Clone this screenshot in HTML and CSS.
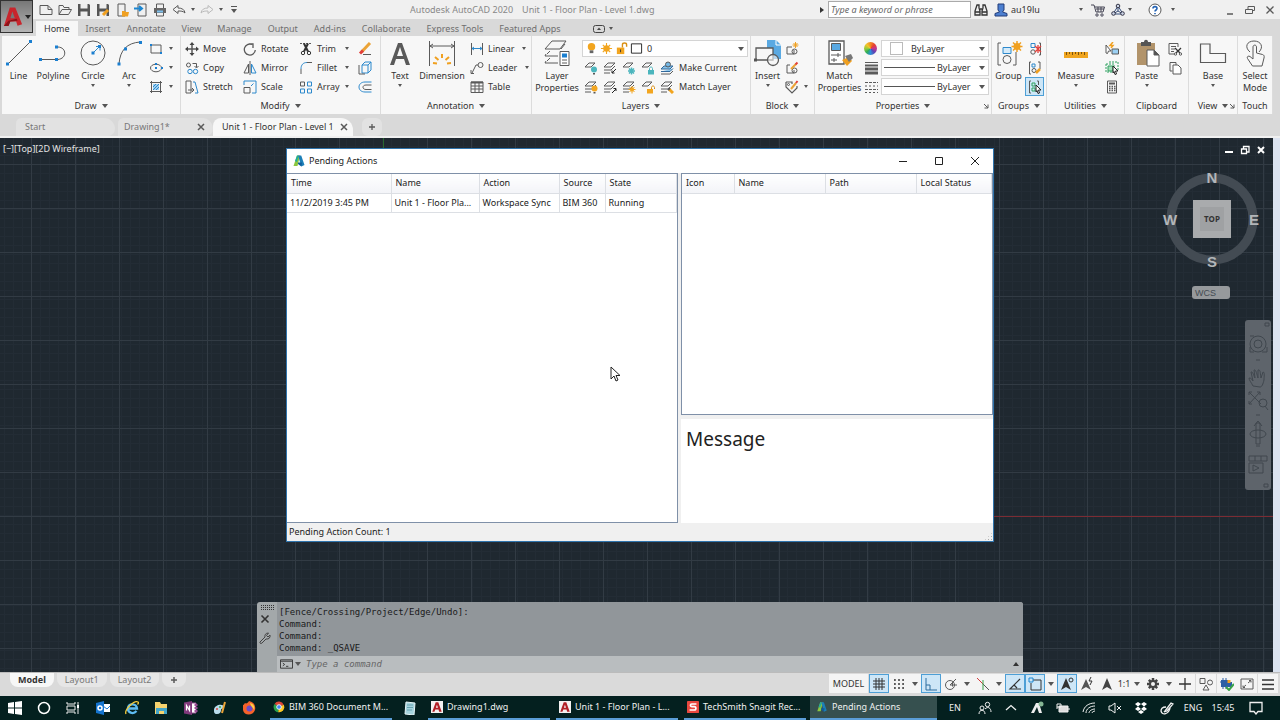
FILE: index.html
```html
<!DOCTYPE html>
<html lang="en">
<head>
<meta charset="utf-8">
<title>Autodesk AutoCAD 2020 - Unit 1 - Floor Plan - Level 1.dwg</title>
<link rel="stylesheet" href="styles.css">
</head>
<body>
<svg class="defs" aria-hidden="true">
  <symbol id="acad" viewBox="0 0 14 14"><path d="M0 0h14v14H0z" fill="#f4f1f1" stroke="none"/><path d="M1.500 12.500 5.500 1.500h3l4 11H9.500L8.800 10H5l-1 2.500z" fill="#b11f26" stroke="none"/><path d="m6.900 4.500 1.300 3.500H5.700z" fill="#f4f1f1" stroke="none"/></symbol>
  <symbol id="adsk" viewBox="0 0 14 14"><path d="M5 1.500h3L5.500 12H1.500z" fill="#8cc63f" stroke="none"/><path d="M3 7 5 1.500h1.500L5 8z" fill="#1fae9b" stroke="none"/><path d="M6 1.500h3.200l3.300 9.500-3.200 1.500z" fill="#1c7fb8" stroke="none"/><path d="M6 8.500h4L9.300 12.500 6 10z" fill="#0f5c9b" stroke="none"/></symbol>
  <symbol id="layer" viewBox="0 0 14 14"><path d="M1 6 5 2h7L8 6zM1 9h7l4-4M1 12h6"/></symbol>
  <symbol id="oneLayer" viewBox="0 0 14 14"><path d="M1 6 5 2h6L7 6z"/></symbol>
</svg>

<header class="top">
  <button class="logo" aria-label="Application menu"><svg viewBox="0 0 22 24"><path d="M1 22 7.500 1.500h6L21 20l-5 1.500L14.500 17H8l-2 5z" fill="#c8252c" stroke="none"/><path d="m10.300 6 2.700 7.500H8z" fill="#777" stroke="none"/><path d="m1 22 5-6 9-2 1 2-8 1-2 5z" fill="#8d1218" stroke="none"/></svg><i class="caret"></i></button>
  <div class="titlebar">
    <nav class="quick" aria-label="Quick access">
      <button aria-label="New"><svg viewBox="0 0 14 14"><path d="M1 2.500h8l4 4v5H1zM9 2.500v4h4"/></svg></button>
      <button aria-label="Open"><svg viewBox="0 0 14 14"><path d="M1 11.500v-9h4l1 2h5v2M1 11.500l3-5h9.500l-3 5z"/></svg></button>
      <button aria-label="Save"><svg viewBox="0 0 14 14"><path d="M1 1h11l1 1v11H1z" fill="#555" stroke="none"/><path d="M3.500 1h7v4.500h-7zM3.500 8.500h7V13h-7z" fill="#eee" stroke="none"/></svg></button>
      <button aria-label="Save as"><svg viewBox="0 0 14 14"><path d="M1 1h11l1 1v11H1z" fill="#555" stroke="none"/><path d="M3.500 1h7v4.500h-7zM3.500 8.500h7V13h-7z" fill="#eee" stroke="none"/><path d="m7 12 5-5" stroke="#f0a020" stroke-width="3"/></svg></button>
      <button aria-label="Open from mobile"><svg viewBox="0 0 14 14"><path d="M3 1h7v12H3z"/><path d="M7 8h3l1 1h3l-1 4.500H7z" fill="#f0a020" stroke="none"/></svg></button>
      <button aria-label="Save to mobile"><svg viewBox="0 0 14 14"><path d="M4 1h8v12H4z"/><path d="M0 5.500h7M5 3l3 2.500L5 8" stroke="#1b86d1" stroke-width="2"/></svg></button>
      <button aria-label="Plot"><svg viewBox="0 0 14 14"><path d="M3.500 5V1h7v4M3.500 9v4h7V9"/><path d="M1 5h12v5H1z" fill="#666" stroke="none"/><path d="M4 8.500h6" stroke="#7cc0ee" stroke-width="2"/></svg></button>
      <button aria-label="Undo"><svg viewBox="0 0 14 14"><path d="m1 6.500 5-4V5c4 0 6.500 1.500 7 5C11 8 9 8 6 8v2.500z"/></svg></button>
      <i class="caret small"></i>
      <button aria-label="Redo"><svg class="faded" viewBox="0 0 14 14"><path d="m13 6.500-5-4V5C4 5 1.500 6.500 1 10 3 8 5 8 8 8v2.500z"/></svg></button>
      <i class="caret small"></i>
      <button class="more" aria-label="Customize"><i class="caret"></i></button>
    </nav>
    <h1><span>Autodesk AutoCAD 2020</span><span>Unit 1 - Floor Plan - Level 1.dwg</span></h1>
    <div class="account">
      <i class="caret side"></i>
      <input type="text" aria-label="Search" placeholder="Type a keyword or phrase">
      <button class="w20" aria-label="Find"><svg viewBox="0 0 14 14"><path d="M3 2h2v3l1 3v4H1V8zM11 2H9v3L8 8v4h5V8zM6 6h2M1 9h5M8 9h5" stroke="#333" stroke-width="1.300"/></svg></button>
      <button class="user"><svg viewBox="0 0 14 14"><path d="M4 1h6v6L8.500 9l4.500 1.500V13H1v-2.500L5.500 9 4 7z" fill="#4c7fd0" stroke="#233c78"/></svg><span>au19lu</span><i class="caret small"></i></button>
      <button class="w20" aria-label="Store"><svg viewBox="0 0 14 14"><path d="M0 2h3l2 7h7l1.500-5H4M5 6h8M7 4v5M10 4v5" stroke="#445"/><circle cx="6" cy="12" r="1.200" stroke="#445"/><circle cx="11" cy="12" r="1.200" stroke="#445"/></svg></button>
      <button class="w20" aria-label="Stay connected"><svg viewBox="0 0 14 14"><path d="M7 3 2 11h10zM7 3v5l-5 3M7 8l5 3" stroke="#334a78"/><circle cx="7" cy="3" r="1.800" fill="#ccd5e8" stroke="#334"/><circle cx="2.500" cy="10.500" r="1.800" fill="#ccd5e8" stroke="#334"/><circle cx="11.500" cy="10.500" r="1.800" fill="#ccd5e8" stroke="#334"/></svg></button>
      <i class="caret small"></i>
      <button class="help" aria-label="Help"><svg viewBox="0 0 14 14"><circle cx="7" cy="7" r="6" fill="#fff"/><path d="M5 5.500C5 3 9 3 9 5.500 9 7 7 7 7 8.500M7 10v1.200" stroke="#2463b4" stroke-width="1.600"/></svg></button>
      <i class="caret small"></i>
    </div>
    <div class="winbtns">
      <button aria-label="Minimize"><svg viewBox="0 0 14 14"><path d="M4 11h6" stroke-width="1.500"/></svg></button>
      <button aria-label="Restore"><svg viewBox="0 0 14 14"><path d="M2.500 6.500h7v4h-7zM5 6V3.500h6.500v4H10"/></svg></button>
      <button aria-label="Close"><svg viewBox="0 0 14 14"><path d="m3.500 3.500 7 7M10.500 3.500l-7 7" stroke-width="1.300"/></svg></button>
    </div>
  </div>
  <nav class="tabs" aria-label="Ribbon tabs">
    <button class="on">Home</button><button>Insert</button><button>Annotate</button><button>View</button><button>Manage</button><button>Output</button><button>Add-ins</button><button>Collaborate</button><button>Express Tools</button><button>Featured Apps</button>
    <button class="collapse" aria-label="Minimize ribbon"><svg viewBox="0 0 12 8"><rect x=".5" y=".5" width="11" height="7" rx="2"/><path d="M4 5h4L6 2.500z" fill="#444" stroke="none"/></svg><i class="caret small"></i></button>
  </nav>
</header>

<section class="ribbon" aria-label="Ribbon">
  <div class="panel">
    <div class="body draw">
      <button class="big"><svg viewBox="0 0 28 28"><path d="M3 25 26 2"/><path d="M1 23.500h3v3H1zM24 1h3v3h-3z" class="bf"/></svg>Line</button>
      <button class="big"><svg viewBox="0 0 28 28"><path d="M2 20.500h17c9-1 9-12 0-12.500"/><path d="M0 19h3v3H0zM16 19h3v3h-3zM16 6.500h3v3h-3z" class="bf"/></svg>Polyline</button>
      <button class="big"><svg viewBox="0 0 28 28"><circle cx="14" cy="14" r="12"/><path d="m14 14 6-6M17 7.500h4v4" class="bs"/><path d="M12.500 12.500h3v3h-3zM19 6h3v3h-3z" class="bf"/></svg>Circle<i class="caret small"></i></button>
      <button class="big"><svg viewBox="0 0 28 28"><path d="M4 25C5 11 12 4 25 3"/><path d="M2.500 23.500h3v3h-3zM9 8.500h3v3H9zM24 2h3v3h-3z" class="bf"/></svg>Arc<i class="caret small"></i></button>
      <div class="rows">
        <button aria-label="Rectangle"><svg viewBox="0 0 14 14"><path d="M2 3h10v8H2z"/><path d="M1 2h2v2H1zM11 10h2v2h-2z" class="bf"/></svg><i class="caret small"></i></button>
        <button aria-label="Ellipse"><svg viewBox="0 0 14 14"><ellipse cx="7" cy="7" rx="5.500" ry="3.800"/><path d="M6 6h2v2H6zM12 6h2v2h-2zM6 2h2v2H6z" class="bf"/></svg><i class="caret small"></i></button>
        <button aria-label="Hatch"><svg viewBox="0 0 14 14"><path d="M4 4h6v6H4z" fill="#9cd0f3" stroke="none"/><path d="m4 7 3-3M4 10l6-6M7 10l3-3" class="bs"/><path d="M2.500 1v12M11.500 1v12M1 2.500h12M1 11.500h12"/></svg><i class="caret small"></i></button>
      </div>
    </div>
    <footer>Draw<i class="caret"></i></footer>
  </div>

  <div class="panel">
    <div class="body modify">
      <div class="rows">
        <button><svg viewBox="0 0 14 14"><path d="M7 2v10M2 7h10" stroke-width="1.500"/><path d="m7 0 2.500 3h-5zM7 14l2.500-3h-5zM0 7l3-2.500v5zM14 7l-3-2.500v5z" fill="#444" stroke="none"/></svg>Move</button>
        <button><svg viewBox="0 0 14 14"><circle cx="3.500" cy="4" r="2"/><path d="M7.500 2.500h4v4M9.500 5l2 2 2-2"/><circle cx="5" cy="10.500" r="2.200" class="bs"/><circle cx="10.500" cy="10.500" r="2.200" class="bs"/></svg>Copy</button>
        <button><svg viewBox="0 0 14 14"><path d="M1 1h5v12H1zM3 10h6M7 8l2 2-2 2"/><path d="M8 2h2l3 11h-3" class="bs"/></svg>Stretch</button>
      </div>
      <div class="rows">
        <button><svg viewBox="0 0 14 14"><path d="M9 2.500A5.500 5.500 0 1 0 12.300 8M6 2h4v4" stroke-width="1.300"/></svg>Rotate</button>
        <button><svg viewBox="0 0 14 14"><path d="M5.500 3v9H1z"/><path d="M8.500 3v9H13z" class="bs"/><path d="M7 0v14"/></svg>Mirror</button>
        <button><svg viewBox="0 0 14 14"><path d="M1 5V1h12v12H9" class="bs"/><path d="M1 7.500h6V13H1z"/><path d="M8 6l2.500-2.500" class="bs"/></svg>Scale</button>
      </div>
      <div class="rows spread">
        <button><svg viewBox="0 0 14 14"><path d="M1 1.500h12" stroke-dasharray="2 1"/><path d="m5 1.500 4 8M9 1.500l-4 8" stroke="#333" stroke-width="2"/><circle cx="4" cy="11" r="1.700" stroke="#333"/><circle cx="10" cy="11" r="1.700" stroke="#333"/></svg>Trim<i class="caret small"></i></button>
        <button><svg viewBox="0 0 14 14"><path d="M2 13V8M8 1.500h5"/><path d="M2 8c0-4 2-6.500 6-6.500" class="bs"/></svg>Fillet<i class="caret small"></i></button>
        <button><svg viewBox="0 0 14 14"><path d="M1.500 2h4v4h-4z"/><path d="M8.500 2h4v4h-4zM1.500 9h4v4h-4zM8.500 9h4v4h-4z" class="bs"/></svg>Array<i class="caret small"></i></button>
      </div>
      <div class="rows">
        <button aria-label="Erase"><svg viewBox="0 0 14 14"><path d="M3.500 10 12 1" stroke="#eba337" stroke-width="3"/><path d="m2 11.500 3-3" stroke="#e2403b" stroke-width="3"/><path d="M5 12.500h8"/></svg></button>
        <button aria-label="Explode"><svg viewBox="0 0 14 14"><path d="M4 4h6v8H4zM4 4l3-3h6v8l-3 3M10 4l3-3" class="bs"/><path d="M1 4v9h6"/></svg></button>
        <button aria-label="Offset"><svg viewBox="0 0 14 14"><path d="M13.500 2H7C-1 2-1 12 7 12h6.500" class="bs"/><path d="M13.500 5H8c-4 0-4 4.500 0 4.500h5.500"/></svg></button>
      </div>
    </div>
    <footer>Modify<i class="caret"></i></footer>
  </div>

  <div class="panel">
    <div class="body anno">
      <button class="big"><svg viewBox="0 0 28 28"><path d="M4 26 12 4h4l8 22h-4l-2-6h-8l-2 6zm7-9h6l-3-9z" fill="#5a5a5a" stroke="none"/></svg>Text<i class="caret small"></i></button>
      <button class="big"><svg viewBox="0 0 28 28"><path d="M1.500 2v25M26.500 2v25M2 7h24M5 5 2 7l3 2M23 5l3 2-3 2"/><path d="m5 24 4 .5M7 18l3.500 3M14 15v4M21 18l-3.500 3M23 24l-4 .5" stroke="#f0a020" stroke-width="2"/></svg>Dimension</button>
      <div class="rows">
        <button><svg viewBox="0 0 14 14"><path d="M1.500 1v12M12.500 1v12"/><path d="M2 6.500h10M4 5 2 6.500 4 8M10 5l2 1.500L10 8" class="bs"/></svg>Linear<i class="caret small"></i></button>
        <button><svg viewBox="0 0 14 14"><circle cx="10.500" cy="4" r="2.500"/><path d="M8 4H6l-4 8M1 9v3.500h3"/></svg>Leader<i class="caret small"></i></button>
        <button><svg viewBox="0 0 14 14"><path d="M1 2h12v10.500H1zM1 6h12M1 9h12M5 3v9M9 3v9"/><path d="M1 2.500h12" stroke-width="2"/></svg>Table</button>
      </div>
    </div>
    <footer>Annotation<i class="caret"></i></footer>
  </div>

  <div class="panel">
    <div class="body layers">
      <button class="big"><svg viewBox="0 0 28 28"><path d="m2 10 7-8h14l-6 8zM3 15l-1 2h13M7 12l-3 3M3 22l-1 2h13M7 19l-3 3M18 10l4-5"/><path d="M17 12.500h9v14h-9z" fill="#fff"/><path d="M19 14.500h5v4h-5z" class="bf"/><path d="M19 21h5M19 24h5"/></svg>Layer<br>Properties</button>
      <div class="stack">
        <div class="combo">
          <svg viewBox="0 0 14 14"><circle cx="7" cy="5" r="4" fill="#f2a51f" stroke="none"/><path d="M5 9h4v3H5z" fill="#666" stroke="none"/></svg>
          <svg viewBox="0 0 14 14"><path d="M7 1v12M1 7h12M3 3l8 8M11 3l-8 8" stroke="#f2a51f" stroke-width="1.200"/><circle cx="7" cy="7" r="3.500" fill="#f2a51f" stroke="none"/></svg>
          <svg viewBox="0 0 14 14"><path d="M2 6h8v7H2z" fill="#f2a51f" stroke="none"/><path d="M8 6V3c0-2.500 4.500-2.500 4.500 0v2" stroke="#d98f14" stroke-width="1.500"/><path d="M6 8v3" stroke="#333"/></svg>
          <svg viewBox="0 0 14 14"><path d="M1.500 2h11v10h-11z" fill="#fff" stroke="#222"/></svg>
          <select aria-label="Layer"><option>0</option></select><i class="caret"></i>
        </div>
        <div class="strip">
          <button aria-label="Off"><svg viewBox="0 0 14 14"><use href="#oneLayer"/><circle cx="10" cy="8.500" r="3" fill="#4bb5bd" stroke="none"/><path d="M9 12h2v1.500H9z" fill="#555" stroke="none"/></svg></button>
          <button aria-label="Isolate"><svg viewBox="0 0 14 14"><use href="#layer"/><path d="m13 8-4 4M9 9.500V12h2.500" stroke="#222"/></svg></button>
          <button aria-label="Freeze"><svg viewBox="0 0 14 14"><use href="#oneLayer"/><path d="M9.500 6.500v7M6 10h7M7 7.500l5 5M12 7.500l-5 5" stroke="#4bb5bd" stroke-width="1.500"/></svg></button>
          <button aria-label="Lock"><svg viewBox="0 0 14 14"><use href="#oneLayer"/><path d="M7 9h6v4.500H7z" fill="#4bb5bd" stroke="none"/><path d="M8.500 9V7.500c0-2 3-2 3 0V9" stroke="#4bb5bd"/></svg></button>
          <button><svg viewBox="0 0 14 14"><path d="m1 8 3-3h9l-3 3zM1 10.500h9l3-3" fill="#8ac5ec" stroke="#31689a"/><path d="M1 13h9l3-3"/><circle cx="8" cy="3.500" r="2.500" fill="#74b8e6"/></svg>Make Current</button>
        </div>
        <div class="strip">
          <button aria-label="Turn all on"><svg viewBox="0 0 14 14"><use href="#layer"/><circle cx="10.500" cy="8.500" r="3" fill="#f2a51f" stroke="none"/><path d="M9.500 12h2v1.500h-2z" fill="#555" stroke="none"/></svg></button>
          <button aria-label="Unisolate"><svg viewBox="0 0 14 14"><use href="#layer"/><path d="m9 13 4-4M10.500 8.500H13V11" stroke="#222"/></svg></button>
          <button aria-label="Thaw all"><svg viewBox="0 0 14 14"><use href="#layer"/><path d="M10 6v7.500M6.500 9.500h7M7.500 7l5 5M12.500 7l-5 5" stroke="#f2a51f"/><circle cx="10" cy="9.500" r="2" fill="#f2a51f" stroke="none"/></svg></button>
          <button aria-label="Unlock"><svg viewBox="0 0 14 14"><use href="#oneLayer"/><path d="M6 9h6v4.500H6z" fill="#f2a51f" stroke="none"/><path d="M10.500 9V7.500c0-2 3-2 3 0V9" stroke="#d98f14"/></svg></button>
          <button><svg viewBox="0 0 14 14"><use href="#layer"/><path d="m9 9 4 4" stroke="#f2a51f" stroke-width="3"/><path d="m8 10 2-2" stroke-width="2"/></svg>Match Layer</button>
        </div>
      </div>
    </div>
    <footer>Layers<i class="caret"></i></footer>
  </div>

  <div class="panel">
    <div class="body block">
      <button class="big"><svg viewBox="0 0 28 28"><path d="M13 1h9l5 5v14H13z" fill="#5aa9e2" stroke="none"/><path d="M22 1v5h5" stroke="#fff"/><path d="M2 9h17v12H2z" fill="#f7f7f7" stroke-width="1.300"/><circle cx="19" cy="21" r="5.500" fill="#f7f7f7" fill-opacity=".6" stroke-width="1.300"/><path d="M0 19.500h3v3H0z" fill="#555" stroke="none"/></svg>Insert<i class="caret small"></i></button>
      <div class="rows">
        <button aria-label="Create block"><svg viewBox="0 0 14 14"><path d="M7 5H2v7h7V8"/><circle cx="9.500" cy="9.500" r="2.500"/><path d="M10.500 0v6M7.500 3h6M8.500 1l4 4M12.500 1l-4 4" stroke="#f0a020"/></svg></button>
        <button aria-label="Edit block"><svg viewBox="0 0 14 14"><path d="M5 4H2v8h7V9"/><circle cx="9.500" cy="9.500" r="2.500"/><path d="m6 8 5-5" stroke="#eba337" stroke-width="2"/><path d="m10.500 3.500 2-2" stroke="#e2403b" stroke-width="2"/></svg></button>
        <button aria-label="Edit attributes"><svg viewBox="0 0 14 14"><path d="M1 2h6v2M1 2v5l6 6 5-5V6" stroke-width="1.200"/><circle cx="3.500" cy="4.500" r="1"/><path d="m6 9 5-6" stroke="#eba337" stroke-width="2"/><path d="m11 3 1.500-2" stroke="#e2403b" stroke-width="2"/></svg><i class="caret small"></i></button>
      </div>
    </div>
    <footer>Block<i class="caret"></i></footer>
  </div>

  <div class="panel">
    <div class="body props">
      <button class="big"><svg viewBox="0 0 28 28"><path d="M3 2h15v23H3z" fill="#fff" stroke-width="1.300"/><path d="M5.500 4.500h9v7h-9z" fill="#5aa9e2"/><path d="M5 16h10M5 21h6M12 14v4M8 19v4"/><path d="m16 21 5 6 5-5-3-4z" fill="#f0a020" stroke="none"/><path d="m19 17 6-2 2 4-4 4z" fill="#777" stroke="none"/></svg>Match<br>Properties</button>
      <div class="rows">
        <button aria-label="Object color"><span class="wheel"></span></button>
        <button aria-label="Lineweight"><svg viewBox="0 0 14 14"><path d="M1 1.500h13" stroke-width="1"/><path d="M1 4.500h13" stroke-width="2"/><path d="M1 8h13M1 12h13" stroke-width="3"/></svg></button>
        <button aria-label="Linetype"><svg viewBox="0 0 14 14"><path d="M1 2.500h13M1 9.500h13" stroke-dasharray="3 1"/><path d="M1 6h13M1 12.500h13" stroke-dasharray="2 2"/></svg></button>
      </div>
      <div class="stack">
        <div class="combo color"><span class="swatch"></span><select aria-label="Color"><option>ByLayer</option></select><i class="caret"></i></div>
        <div class="combo"><span class="sample"></span><select aria-label="Lineweight value"><option>ByLayer</option></select><i class="caret"></i></div>
        <div class="combo"><span class="sample"></span><select aria-label="Linetype value"><option>ByLayer</option></select><i class="caret"></i></div>
      </div>
    </div>
    <footer>Properties<i class="caret"></i><svg class="launch" viewBox="0 0 6 6"><path d="m1 1 4 4M5 1.500V5H1.500"/></svg></footer>
  </div>

  <div class="panel">
    <div class="body groups">
      <button class="big"><svg viewBox="0 0 28 28"><path d="M6 4H3v22h3M18 26h3V13"/><path d="M8 8.500h8v6H8z" fill="#d5ebfa" class="bs"/><circle cx="12" cy="20.500" r="4"/><path d="M22 2v11M16.500 7.500h11M18 3.500l8 8M26 3.500l-8 8" stroke="#f0a020" stroke-width="1.500"/><circle cx="22" cy="7.500" r="3.500" fill="#f0a020" stroke="none"/></svg>Group</button>
      <div class="rows">
        <button aria-label="Ungroup"><svg viewBox="0 0 14 14"><path d="M3 1.500h4v4H3z" class="bs"/><circle cx="5" cy="10" r="2.200"/><path d="M11 1h1.500v12H11"/><path d="m7 4 6 6M13 4l-6 6M10 3v8" stroke="#e2403b" stroke-width="1.300"/></svg></button>
        <button aria-label="Group edit"><svg viewBox="0 0 14 14"><path d="M3 1H1.500v12H3M10 1h2v7"/><path d="M4 3h3v3H4z" class="bs"/><circle cx="6" cy="9.500" r="2"/><path d="m8 12 4-4" stroke="#f0a020" stroke-width="2.500"/></svg></button>
        <button class="hl" aria-label="Group selection on"><svg viewBox="0 0 14 14"><path d="M3 1H1.500v12H3M9 1h1.500v4"/><path d="M4 3h3v3H4zM4 8h3v3H4z" stroke="#2fa160"/><path d="m8 5 5 5h-2.500l1 3-1.500.5-1-3L8 12z" fill="#fff" stroke="#222"/></svg></button>
      </div>
    </div>
    <footer>Groups<i class="caret"></i></footer>
  </div>

  <div class="panel">
    <div class="body utils">
      <button class="big"><svg viewBox="0 0 28 28"><path d="M2 13h24v6H2z" fill="#f0a51f" stroke="none"/><path d="M4.500 13v3M7.500 13v2M10.500 13v3M13.500 13v2M16.500 13v3M19.500 13v2M22.500 13v3" stroke="#7a5310"/></svg>Measure<i class="caret small"></i></button>
      <div class="rows">
        <button aria-label="Quick select"><svg viewBox="0 0 14 14"><path d="M7 7h6.500v5H7z" fill="#9cd0f3"/><path d="m1 3 5 6H3.500l-1 2.500L1 11z" fill="#fff"/><path d="m8 0-3 3.500h3L6 6" stroke="#f0a020" stroke-width="1.500"/></svg></button>
        <button aria-label="Select all"><svg viewBox="0 0 14 14"><path d="M1 3h8v8H1zM4 1h9v8" stroke="#2fa160" stroke-dasharray="2 1"/><path d="M3 5h5v5H3z" fill="#a5dcb9" stroke="#2fa160"/><path d="m8 5 5 5h-2.500l1 3-1.500.5-1-3L8 12z" fill="#fff" stroke="#222"/></svg></button>
        <button aria-label="Calculator"><svg viewBox="0 0 14 14"><path d="M2.500 1h9v12h-9z"/><path d="M4 3.500h6" stroke-width="2"/><path d="M4 6.500h6.500M4 8.500h6.500M4 10.500h6.500" stroke-width="1.500" stroke-dasharray="1.500 1"/></svg></button>
      </div>
    </div>
    <footer>Utilities<i class="caret"></i></footer>
  </div>

  <div class="panel">
    <div class="body clip">
      <button class="big"><svg viewBox="0 0 28 28"><path d="M4 4h18v22H4z" fill="#b2946b" stroke="none"/><path d="M8 3h3c0-3 4-3 4 0h3v4H8z" fill="#555" stroke="none"/><path d="M14 11h7l5 5v11H14z" fill="#fff"/><path d="M21 11v5h5z" fill="#555"/></svg>Paste<i class="caret small"></i></button>
      <div class="rows">
        <button aria-label="Cut"><svg viewBox="0 0 14 14"><path d="M6 12H1V1.500h9V5M3 4.500h5M3 7h4M3 9.500h3"/><path d="m7 6 5 5M13 6l-5 5" stroke="#333" stroke-width="1.300"/><circle cx="7.500" cy="12" r="1.200"/><circle cx="12.500" cy="12" r="1.200"/></svg></button>
        <button aria-label="Copy clip"><svg viewBox="0 0 14 14"><path d="M4.500 10H2V1.500h6V4"/><path d="M5 4h5l3 3v6H5z" fill="#fff"/></svg></button>
      </div>
    </div>
    <footer>Clipboard</footer>
  </div>

  <div class="panel">
    <div class="body solo">
      <button class="big"><svg viewBox="0 0 28 28"><path d="M1.500 5h9.500v9.500h15.500v9h-25z" stroke-width="1.200"/></svg>Base<i class="caret small"></i></button>
    </div>
    <footer>View<i class="caret"></i><svg class="launch" viewBox="0 0 6 6"><path d="m1 1 4 4M5 1.500V5H1.500"/></svg></footer>
  </div>

  <div class="panel">
    <div class="body solo">
      <button class="big"><svg viewBox="0 0 28 28"><path d="M9 13c-6-5-3-11 4-11s10 6 5 11"/><path d="M12 18V8c0-2.500 3.500-2.500 3.500 0v6l6 1.500c1.500.5 2 1.500 1.500 3.500L21 27H11.500l-5-7.500c-1-2 1-3 2.500-2l3 2.500z"/></svg>Select<br>Mode</button>
    </div>
    <footer>Touch</footer>
  </div>
</section>

<nav class="docs" aria-label="Open drawings">
  <div class="doc start"><button>Start</button></div>
  <div class="doc second"><button>Drawing1*</button><button aria-label="Close Drawing1"><svg viewBox="0 0 8 8"><path d="m1 1 6 6M7 1 1 7" stroke-width="1.500"/></svg></button></div>
  <div class="doc on"><button>Unit 1 - Floor Plan - Level 1</button><button aria-label="Close Unit 1"><svg viewBox="0 0 8 8"><path d="m1 1 6 6M7 1 1 7" stroke-width="1.500"/></svg></button></div>
  <div class="doc add"><button aria-label="New drawing"><svg viewBox="0 0 8 8"><path d="M4 1v6M1 4h6" stroke-width="1.300"/></svg></button></div>
</nav>

<main class="canvas">
  <div class="axis x"></div><div class="axis y"></div>
  <div class="viewlabel">[−][Top][2D Wireframe]</div>
  <div class="viewwin">
    <button aria-label="Minimize view"><svg viewBox="0 0 10 10"><path d="M1 7h8" stroke="#fff" stroke-width="2"/></svg></button>
    <button aria-label="Restore view"><svg viewBox="0 0 10 10"><path d="M1.500 4h5v4.500h-5zM3.500 3.500V1.500H9V7H7" stroke="#fff" stroke-width="1.300"/></svg></button>
    <button aria-label="Close view"><svg viewBox="0 0 10 10"><path d="m2 2 6 6M8 2 2 8" stroke="#fff" stroke-width="2"/></svg></button>
  </div>
  <svg class="cube" viewBox="0 0 100 100" role="img" aria-label="View cube">
    <circle cx="50" cy="50" r="41" stroke="#434b53" stroke-width="9"/>
    <path d="M31 31h38v38H31z" fill="#a9abad" stroke="none"/><path d="M38 38h24v24H38z" fill="#9fa1a3" stroke="none"/>
    <text x="50" y="53" class="face">TOP</text>
    <text x="50" y="14">N</text><text x="50" y="98">S</text><text x="8" y="56">W</text><text x="92" y="56">E</text>
  </svg>
  <button class="wcs">WCS</button>
  <div class="navbar">
    <svg viewBox="0 0 26 170"><path d="M20 3h4v3h-4z"/><circle cx="13" cy="24" r="8"/><circle cx="13" cy="24" r="4"/><path d="M5 16h4M17 32h5v-5M5 27v5h4M11 40h4M11 95h4M11 126h4"/><path d="M8 66c-2-4-4-6-4-8 3 0 3 2 4 3l-2-9c2-1 3 5 4 6l-1-8c2-1 3 5 4 8V50c3-1 2 5 3 8l2-6c2 0 1 5 1 8-1 4-2 7-4 7z"/><path d="m4 72 12 12M15 72 4 84M4 75v-3h3M12 72h3v3M4 81v3h3"/><circle cx="18" cy="83" r="4"/><path d="m20 86 3 4M11 103h4v21h-4zM9 106l4-5 4 5"/><ellipse cx="13" cy="114" rx="8" ry="4"/><path d="M4 136h18v5H4zM10 136v5M16 136v5M4 143h14v10H4zM8 145v6l6-3zM19 164h4v3h-4z"/></svg>
  </div>

  <section class="dialog" role="dialog" aria-labelledby="dlg">
    <header><svg viewBox="0 0 14 14"><use href="#adsk"/></svg><h2 id="dlg">Pending Actions</h2>
      <button aria-label="Minimize dialog"><svg viewBox="0 0 12 12"><path d="M2 6.500h8" stroke="#222"/></svg></button>
      <button aria-label="Maximize dialog"><svg viewBox="0 0 12 12"><path d="M2.500 2.500h7v7h-7z" stroke="#222"/></svg></button>
      <button aria-label="Close dialog"><svg viewBox="0 0 12 12"><path d="m2 2 8 8M10 2l-8 8" stroke="#222"/></svg></button>
    </header>
    <div class="panes">
      <div class="list">
        <table>
          <colgroup><col class="c104"><col class="c88"><col class="c80"><col class="c46"><col></colgroup>
          <thead><tr><th>Time</th><th>Name</th><th>Action</th><th>Source</th><th>State</th></tr></thead>
          <tbody><tr><td>11/2/2019 3:45 PM</td><td>Unit 1 - Floor Pla...</td><td>Workspace Sync</td><td>BIM 360</td><td>Running</td></tr></tbody>
        </table>
      </div>
      <div class="rightpane">
        <div class="list">
          <table>
            <colgroup><col class="c52"><col class="c91"><col class="c91"><col></colgroup>
            <thead><tr><th>Icon</th><th>Name</th><th>Path</th><th>Local Status</th></tr></thead>
          </table>
        </div>
        <div class="message">Message</div>
      </div>
    </div>
    <footer><span>Pending Action Count: 1</span><i class="grip"></i></footer>
  </section>

  <svg class="pointer" viewBox="0 0 10 16"><path d="M1 1v12l3-3 2 5 2-1-2-4.500h4z" fill="#fff" stroke="#222"/></svg>

  <section class="command" aria-label="Command line">
    <div class="gutter">
      <i class="dots"></i>
      <button aria-label="Close command line"><svg viewBox="0 0 12 12"><path d="m2.500 2.500 7 7M9.500 2.500l-7 7" stroke="#333" stroke-width="1.600"/></svg></button>
      <button class="wrench" aria-label="Customize command line"><svg viewBox="0 0 12 12"><path d="M1 10c-.500 1.500 1 2 2 1l4-4c3 .5 4.500-1.500 4-4L9 5 7.500 3.500 9.500 1c-3 0-4 2-3.500 4z" stroke="#444"/></svg></button>
    </div>
    <div class="console">
      <div class="history">
        <p>[Fence/Crossing/Project/Edge/Undo]:</p><p>Command:</p><p>Command:</p><p>Command: _QSAVE</p>
      </div>
      <div class="entry">
        <svg viewBox="0 0 14 10"><path d="M.5.5h13v9H.5zM.5 2h13M3 4l2 1.500L3 7M6.500 7.500h2.500" stroke="#333"/></svg><i class="caret"></i>
        <input type="text" aria-label="Command" placeholder="Type a command"><i class="caret up"></i>
      </div>
    </div>
  </section>
</main>

<section class="bottom">
  <nav class="layouts" aria-label="Layouts"><button class="on">Model</button><button>Layout1</button><button>Layout2</button><button aria-label="New layout"><svg viewBox="0 0 8 8"><path d="M4 1v6M1 4h6" stroke-width="1.500"/></svg></button></nav>
  <div class="status">
    <button class="model">MODEL</button>
    <button class="hl" aria-label="Grid"><svg viewBox="0 0 14 14"><path d="M4 1v12M7 1v12M10 1v12M1 4h12M1 7h12M1 10h12" stroke="#333"/></svg></button>
    <button aria-label="Snap"><svg viewBox="0 0 14 14"><path d="M2 3h10M2 7h10M2 11h10" stroke-width="1.800" stroke-dasharray="1.800 2.300"/></svg></button>
    <button class="dd" aria-label="Snap options"><i class="caret"></i></button>
    <button class="hl" aria-label="Ortho"><svg viewBox="0 0 14 14"><path d="M2 1v12h11M2 8h4v5" stroke="#2c6d9e"/></svg></button>
    <button aria-label="Polar"><svg viewBox="0 0 14 14"><circle cx="6" cy="8" r="4.500"/><path d="M6 8h7M6 8l6-6M8.500 6v3.500"/></svg></button>
    <button class="dd" aria-label="Polar options"><i class="caret"></i></button>
    <button aria-label="Isodraft"><svg viewBox="0 0 14 14"><path d="m1 1 12 12" stroke="#555"/><path d="m1 1 6 6" stroke="#d3393a"/><path d="M7 3v10" stroke="#39a04a"/></svg></button>
    <button class="dd" aria-label="Isodraft options"><i class="caret"></i></button>
    <button class="hl" aria-label="Object snap tracking"><svg viewBox="0 0 14 14"><path d="M12 2 2 12h11M6 8l3 3" stroke="#333" stroke-width="1.200"/></svg></button>
    <button class="hl" aria-label="Object snap"><svg viewBox="0 0 14 14"><path d="M5 3h8v10H3V6" stroke="#333"/><path d="M1 1h4v4H1z" stroke="#1b86d1"/></svg></button>
    <button class="dd" aria-label="Object snap options"><i class="caret"></i></button>
    <button class="hl" aria-label="Annotation visibility"><svg viewBox="0 0 14 14"><path d="m6 1 5 12-5-3-5 3z" fill="#333" stroke="none"/><circle cx="11" cy="3" r="2" stroke="#333"/></svg></button>
    <button aria-label="Auto scale"><svg viewBox="0 0 14 14"><path d="m6 2 5 11-5-3-5 3z" fill="#555" stroke="none"/><path d="m11 0-2 4h3l-2 4" stroke="#333"/></svg></button>
    <button aria-label="Annotation scale"><svg viewBox="0 0 14 14"><path d="m7 1 5 12-5-3-5 3z" fill="#444" stroke="none"/></svg></button>
    <button class="ratio">1:1</button>
    <button class="dd" aria-label="Scale list"><i class="caret"></i></button>
    <button aria-label="Workspace"><svg viewBox="0 0 14 14"><path d="M7 1v12M1 7h12M2.800 2.800l8.400 8.400M11.200 2.800l-8.400 8.400" stroke="#444" stroke-width="2.500"/><circle cx="7" cy="7" r="4" fill="#444" stroke="none"/><circle cx="7" cy="7" r="2" fill="#f5f5f5" stroke="none"/></svg></button>
    <button class="dd" aria-label="Workspace options"><i class="caret"></i></button>
    <button class="sep" aria-label="Annotation monitor"><svg viewBox="0 0 14 14"><path d="M7 1v12M1 7h12" stroke="#333" stroke-width="1.300"/></svg></button>
    <button class="sep" aria-label="Isolate objects"><svg viewBox="0 0 14 14"><path d="M1 1.500h5v5H1zM7 8l3 5H4z"/><circle cx="11" cy="5.500" r="2.500"/></svg></button>
    <button aria-label="Hardware acceleration"><svg viewBox="0 0 14 14"><path d="M1 3h8v7H1z" fill="#2b5fa5" stroke="none"/><path d="M3 1v11M6 1v11M0 5h10" stroke="#2b5fa5"/><path d="M7 5h5v5H7z" fill="#2b5fa5" stroke="none"/><path d="M7.500 3h3v3h-3z" fill="#f0a020" stroke="none"/><path d="m6 10 3 3 5-6" stroke="#38a346" stroke-width="2"/></svg></button>
    <button class="sep" aria-label="Clean screen"><svg viewBox="0 0 14 14"><path d="M1 2h12v10H1zM8 6l3-2.500M9 3.500h2v2M6 8l-3 2.500M3 8.500v2h2"/></svg></button>
    <button aria-label="Customization"><svg viewBox="0 0 14 14"><path d="M1 3h12M1 7.500h12M1 12h12" stroke="#333" stroke-width="1.300"/></svg></button>
  </div>
</section>

<footer class="taskbar">
  <div class="pins">
    <button aria-label="Start menu"><svg viewBox="0 0 14 14"><path d="m0 2 6-1v5.500H0zM7 1l7-1v6.500H7zM0 7.500h6V13l-6-1zM7 7.500h7V14l-7-1z" fill="#fff" stroke="none"/></svg></button>
    <button aria-label="Cortana"><svg viewBox="0 0 14 14"><circle cx="7" cy="7" r="5.500" stroke="#fff" stroke-width="1.500"/></svg></button>
    <button aria-label="Task view"><svg viewBox="0 0 14 14"><path d="M1 1v2h8V1M1 13v-2h8v2M1 5h8v4H1zM12 1v12" stroke="#eee"/><path d="M11 4h2v3h-2z" fill="#fff" stroke="none"/></svg></button>
    <button aria-label="Outlook"><svg viewBox="0 0 14 14"><path d="M7 3h7v8H7z" fill="#fff" stroke="none"/><path d="m7 5 4 3 3-3" stroke="#1976d2"/><path d="m0 2 8-2v14l-8-2z" fill="#1474cf" stroke="none"/><circle cx="4" cy="7" r="2" stroke="#fff" stroke-width="1.500"/></svg></button>
    <button aria-label="Internet Explorer"><svg viewBox="0 0 14 14"><path d="M11.500 10C8 14 2.500 11.500 3 7c.5-5 8.500-5 9 .5H4" stroke="#5ebcf2" stroke-width="2.300"/><path d="M1 13C-1 9 9-1 13 1c1 .5 0 2-.5 2.500" stroke="#f3ca3b" stroke-width="1.300"/></svg></button>
    <button aria-label="File Explorer"><svg viewBox="0 0 14 14"><path d="M1 1h5l1 2h6v10H1z" fill="#f5d36e" stroke="none"/><path d="M2 7h11v6h-3v-3H5v3H2z" fill="#42a5c9" stroke="none"/></svg></button>
    <button aria-label="OneNote"><svg viewBox="0 0 14 14"><path d="M7 2h5v10H7z" fill="#fff" stroke="#9b4d95"/><path d="M12 3v8" stroke="#9b4d95" stroke-width="3" stroke-dasharray="2 1"/><path d="m0 1.500 8-1.500v14l-8-1.500z" fill="#80397b" stroke="none"/><path d="M2.500 9.500v-5l3 5v-5" stroke="#fff" stroke-width="1.300"/></svg></button>
    <button aria-label="Paint"><svg viewBox="0 0 14 14"><path d="M1 9c0-5 9-7 10-3 0 2-3 1-3 3s-1 4-4 4-3-2-3-4z" fill="#b8dcec" stroke="none"/><circle cx="4" cy="8" r="1" fill="#e24b3b" stroke="none"/><circle cx="7" cy="6" r="1" fill="#37a546" stroke="none"/><path d="m9 12 3-11" stroke="#eba337" stroke-width="2"/></svg></button>
    <button aria-label="Firefox"><svg viewBox="0 0 14 14"><path d="M1 4c1 0 1-1 2-2 1 1 3 0 4-2 5 1 7 5 6 9-2 6-11 6-12 0z" fill="#f5622a" stroke="none"/><circle cx="7.500" cy="7.500" r="3" fill="#6b4cc8" stroke="none"/><path d="M8 2c4 1 5 4 4 7-1-3-3-3-4-7z" fill="#ffd043" stroke="none"/></svg></button>
  </div>
  <button class="app"><svg viewBox="0 0 14 14"><path d="M7 7 1.800 3.500A6 6 0 0 1 12.500 4.500z" fill="#dc4637" stroke="none"/><path d="M7 7 1.800 3.500A6 6 0 0 0 6 13z" fill="#2ba24c" stroke="none"/><path d="m7 7 5.500-2.500A6 6 0 0 1 6 13z" fill="#fbc724" stroke="none"/><circle cx="7" cy="7" r="2.700" fill="#4285f4" stroke="#fff"/></svg><span>BIM 360 Document M...</span></button>
  <button class="note" aria-label="Notepad"><svg viewBox="0 0 14 14"><path d="m3 1 9 1-1 12-9-1z" fill="#a6d3dc" stroke="#e7f5f7"/><path d="M4 4h6M4 6.500h6M4 9h5" stroke="#66a3b1"/></svg></button>
  <button class="app"><svg viewBox="0 0 14 14"><use href="#acad"/></svg><span>Drawing1.dwg</span></button>
  <button class="app gap"><svg viewBox="0 0 14 14"><use href="#acad"/></svg><span>Unit 1 - Floor Plan - L...</span></button>
  <button class="app gap"><svg viewBox="0 0 14 14"><rect width="14" height="14" rx="1" fill="#e8483f" stroke="none"/><path d="M11 3.500H5.500c-2 0-2 3 0 3h3c2.500 0 2.500 4 0 4H3" stroke="#fff" stroke-width="2"/></svg><span>TechSmith Snagit Rec...</span></button>
  <button class="app active"><svg viewBox="0 0 14 14"><use href="#adsk"/></svg><span>Pending Actions</span></button>
  <div class="tray">
    <button class="en">EN</button>
    <button aria-label="People"><svg viewBox="0 0 14 14"><circle cx="9.500" cy="3.500" r="2.200"/><circle cx="4" cy="7" r="2"/><path d="M1 13c0-5 6-5 6 0M7 8c3-3 6-1 6 3"/></svg></button>
    <button aria-label="Hidden icons"><svg viewBox="0 0 14 14"><path d="m2 9 5-4.500L12 9" stroke-width="1.300"/></svg></button>
    <button aria-label="Autodesk app"><svg viewBox="0 0 14 14"><path d="m1 12 5-10h3l3 10H9L7 6l-3 6z" fill="#eee" stroke="none"/><circle cx="11" cy="3" r="2.500" fill="#85b694" stroke="none"/></svg></button>
    <button aria-label="Battery"><svg viewBox="0 0 14 14"><path d="M3 5h9v6H3z" fill="#ddd"/><path d="M13 7v2M1 3h4v3H1zM1 6v2"/></svg></button>
    <button aria-label="Network"><svg viewBox="0 0 14 14"><path d="M1 11C2 5 7 2 13 2M4 12c0-4 4-7 9-7M7 12c0-2 3-4 6-4M10 12c0-1 2-2 3-2"/></svg></button>
    <button aria-label="Volume"><svg viewBox="0 0 14 14"><path d="M1 5h2l4-3v10L3 9H1zM9 5l4 4M13 5 9 9"/></svg></button>
    <button aria-label="Dropbox"><svg viewBox="0 0 14 14"><path d="m4 1 3 2-3 2.500L1 3zM10 1l3 2-3 2.500L7 3zM4 5.500 7 8l-3 2-3-2zM10 5.500 13 8l-3 2-3-2zM7 9l3 2-3 2-3-2z" fill="#fff" stroke="none"/></svg></button>
    <button aria-label="Pen"><svg viewBox="0 0 14 14"><path d="m5 10 6-8 2 1-6 7-3 1zM6 6C2 6 1 8 1 10c1 5 8 3 9-3" stroke-width="1.300"/></svg></button>
    <button>ENG</button>
    <button class="clock">15:45</button>
    <button class="notif" aria-label="Notifications"><svg viewBox="0 0 14 14"><path d="M1 1.500h12v9H9L7 13l-2-2.500H1z" stroke-width="1.300"/></svg></button>
  </div>
</footer>
</body>
</html>
```
FILE: styles.css
```css
* { box-sizing: border-box; }
body {
  margin: 0;
  height: 100vh;
  display: flex;
  flex-direction: column;
  overflow: hidden;
  background: #d9d9d9;
  color: #333;
  font: 9px/12px "Noto Sans", "Open Sans", sans-serif;
}
h1, h2, p { margin: 0; font: inherit; }
button {
  display: flex;
  align-items: center;
  justify-content: center;
  margin: 0;
  padding: 0;
  border: 0;
  background: none;
  color: inherit;
  font: inherit;
  white-space: nowrap;
}
input, select {
  min-width: 0;
  margin: 0;
  padding: 0;
  border: 0;
  background: none;
  color: inherit;
  font: inherit;
}
select { appearance: none; flex: 1; }
svg { width: 14px; height: 14px; flex: none; fill: none; stroke: #5a5a5a; stroke-width: 1; }
.defs { display: none; }
.bs { stroke: #2d89cc; }
.bf { fill: #1b7fd0; stroke: none; }
.caret {
  flex: none;
  width: 0;
  height: 0;
  border: 3px solid transparent;
  border-top: 4px solid #555;
  border-bottom: 0;
}
.caret.small { border-width: 3px 2px 0; }
.caret.side { border: 3px solid transparent; border-left: 4px solid #333; border-right: 0; }
.caret.up { border-top: 0; border-bottom: 4px solid #333; }

/* Title bar and ribbon tabs */
.top {
  flex: none;
  display: grid;
  grid-template: 19px 17px / 33px 1fr;
}
.logo {
  grid-row: 1 / 3;
  align-self: start;
  height: 33px;
  gap: 2px;
  border: 1px solid #333;
  background: linear-gradient(#777, #b5b5b5);
}
.logo svg { width: 20px; height: 24px; }
.logo .caret { border-top-color: #222; }
.titlebar { display: flex; align-items: center; background: #f0f0f0; }
.quick { flex: 372 1 0; display: flex; align-items: center; gap: 5px; padding-left: 6px; }
.quick .more { margin-left: 3px; border-top: 1px solid #555; padding-top: 2px; }
.faded { opacity: .35; }
.titlebar h1 { display: flex; gap: 9px; color: #888; white-space: nowrap; }
.account { flex: 567 1 0; display: flex; align-items: center; justify-content: flex-end; }
.account input {
  width: 143px;
  height: 17px;
  margin-left: 4px;
  padding-left: 2px;
  border: 1px solid #aaa;
  background: #fff;
}
::placeholder { color: #666; opacity: 1; font-style: italic; }
.w20 { width: 20px; }
.user { width: 92px; gap: 3px; justify-content: flex-start; padding-left: 3px; }
.user .caret { margin-left: auto; }
.user + .w20 { margin-left: 5px; }
.help { width: 32px; margin-left: 7px; }
.help + .caret { margin-right: 45px; }
.winbtns { display: flex; }
.winbtns button { width: 20px; }
.tabs { display: flex; align-items: flex-end; padding-left: 3px; color: #6f6f6f; }
.tabs button { height: 15px; padding: 0 8px; }
.tabs .on { background: #f7f7f7; color: #333; }
.tabs .collapse { gap: 4px; margin-left: 16px; }
.collapse svg { width: 12px; height: 8px; stroke: #444; }

/* Ribbon */
.ribbon {
  flex: none;
  display: grid;
  grid-template-columns: 179fr 200fr 151fr 219fr 64fr 177fr 55fr 78fr 64fr 49fr 35fr;
  padding: 0 7px 0 2px;
}
.panel {
  min-width: 0;
  background: #f7f7f7;
  border-right: 1px solid #dcdcdc;
}
.body { display: grid; height: 61px; padding-top: 3px; }
.panel footer {
  position: relative;
  display: flex;
  align-items: center;
  justify-content: center;
  gap: 5px;
  height: 17px;
}
.launch { position: absolute; right: 2px; width: 6px; height: 6px; }
.big {
  flex-direction: column;
  justify-content: flex-start;
  align-self: start;
}
.big svg { width: 28px; height: 28px; margin-bottom: 3px; }
.big .caret { margin-top: 2px; }
.rows, .stack { display: grid; grid-template-rows: repeat(3, 19px); }
.rows button { justify-content: flex-start; gap: 4px; }
.rows .caret { margin-left: 1px; }
.spread .caret { margin-left: auto; }
.draw { grid-template-columns: 33px 36px 44px 28px 1fr; }
.draw .rows { padding: 0 7px 0 6px; }
.draw .rows .caret { margin-left: 2px; }
.modify { grid-template-columns: 58px 56px 50px 1fr; padding-left: 4px; }
.modify .rows:last-child { padding-left: 9px; }
.anno { grid-template-columns: 38px 46px 1fr; }
.anno .rows { padding-left: 5px; }
.anno .rows .caret { margin-left: 4px; }
.layers { grid-template-columns: 50px 1fr; }
.combo {
  display: flex;
  align-items: center;
  align-self: center;
  height: 17px;
  margin-right: 2px;
  padding: 0 3px 0 2px;
  border: 1px solid #d4d4d4;
  background: #fff;
}
.layers .combo svg { width: 13px; height: 13px; margin-right: 2px; }
.layers .combo select { padding-left: 2px; }
.strip { display: flex; align-items: center; gap: 5px; padding-left: 2px; }
.strip button { gap: 5px; }
.block { grid-template-columns: 33px 1fr; }
.block .rows { padding-left: 1px; }
.props { grid-template-columns: 49px 17px 1fr; }
.color { padding-left: 8px; }
.swatch { width: 13px; height: 13px; margin-right: 8px; border: 1px solid #bbb; }
.sample { width: 51px; margin-right: 2px; border-top: 1px solid #555; }
.wheel {
  width: 13px;
  height: 13px;
  border-radius: 50%;
  background: conic-gradient(#f08a24, #e8402e, #c2368f, #5b45b5, #2d8fd8, #2fae5a, #9ac93a, #f3c52a, #f08a24);
}
.groups { grid-template-columns: 33px 1fr; }
.groups .rows { padding-right: 2px; }
.groups .rows button { justify-content: center; }
.rows .hl, .status .hl { background: #cde6f7; box-shadow: inset 0 0 0 1px #4d9fd6; }
.utils { grid-template-columns: 58px 1fr; }
.clip { grid-template-columns: 43px 1fr; }

/* Drawing tabs */
.docs {
  flex: none;
  display: flex;
  align-items: flex-end;
  height: 24px;
  padding-left: 16px;
  border-bottom: 2px solid #f0f0f0;
  color: #777;
}
.doc {
  display: flex;
  align-items: center;
  justify-content: space-between;
  height: 18px;
  padding: 0 8px;
  border-radius: 6px 12px 8px 0;
  background: #e2e2e2;
}
.doc svg { width: 8px; height: 8px; }
.start { width: 99px; margin-right: 3px; padding-left: 9px; }
.second { width: 95px; padding-left: 6px; }
.doc.on { gap: 6px; padding: 0 5px 0 9px; background: #f7f7f7; color: #333; border-radius: 8px 12px 0 0; }
.add { margin-left: 9px; padding: 0 6px; border-radius: 6px; }

/* Drawing area */
.canvas {
  position: relative;
  flex: 1;
  min-height: 0;
  display: grid;
  grid-template-rows: 1fr auto;
  justify-items: center;
  border-right: 7px solid #dbe3f0;
  padding: 10px 0 0 7px;
  background:
    linear-gradient(#323b44 1px, transparent 1px) 0 26px / 44px 44px,
    linear-gradient(90deg, #323b44 1px, transparent 1px) 31px 0 / 44px 44px,
    linear-gradient(#232c35 1px, transparent 1px) 0 8px / 44px 9px,
    linear-gradient(90deg, #232c35 1px, transparent 1px) 4px 0 / 9px 44px,
    #1f2830;
}
.axis { position: absolute; }
.axis.x { left: 30%; right: 0; top: 378px; border-top: 1px solid #7c2c33; }
.axis.y { top: 0; left: 383px; height: 378px; border-left: 1px solid #28682f; }
.viewlabel { position: absolute; left: 3px; top: 5px; color: #e4e4e4; }
.viewwin { position: absolute; right: 7px; top: 7px; display: flex; gap: 6px; }
.viewwin svg { width: 10px; height: 10px; }
.cube { position: absolute; right: 11px; top: 31px; width: 100px; height: 100px; }
.cube text {
  fill: #b3b6b9;
  stroke: none;
  font: bold 15px "Liberation Sans", sans-serif;
  text-anchor: middle;
}
.cube .face { fill: #333; font: bold 8px "Noto Sans", sans-serif; }
.wcs {
  position: absolute;
  right: 43px;
  top: 148px;
  width: 38px;
  height: 13px;
  justify-content: flex-start;
  padding-left: 3px;
  border-radius: 3px;
  background: #96999c;
  color: #444b52;
  font: 9px/12px "Liberation Sans", sans-serif;
}
.navbar {
  position: absolute;
  right: 2px;
  top: 182px;
  border-radius: 3px;
  background: #5e646b;
}
.navbar svg { display: block; width: 26px; height: 170px; stroke: #40474e; }
.pointer { position: absolute; left: 610px; top: 228px; width: 10px; height: 16px; }

/* Pending actions window */
.dialog {
  position: relative;
  display: flex;
  flex-direction: column;
  align-self: start;
  width: 708px;
  height: 394px;
  border: 1px solid #2f74ad;
  background: #f0f0f0;
  color: #222;
}
.dialog header { display: flex; align-items: center; height: 24px; padding-left: 5px; background: #fff; }
.dialog h2 { flex: 1; padding-left: 3px; }
.dialog header button { width: 36px; height: 22px; }
.dialog header button svg { width: 12px; height: 12px; }
.panes { flex: 1; display: grid; grid-template-columns: 391fr 312fr; gap: 3px; }
.rightpane { display: grid; grid-template-rows: 243fr 104fr; gap: 4px; }
.list { border: 1px solid #7f90a8; border-left-width: 0; background: #fff; }
.rightpane .list { border-left-width: 1px; }
table { width: 100%; table-layout: fixed; border-collapse: collapse; }
th, td { padding: 0 0 0 3px; text-align: left; font-weight: normal; white-space: nowrap; border: 1px solid #dcdfe4; border-width: 0 1px 1px 0; height: 19px; }
th { padding-left: 4px; background: linear-gradient(#fff, #f3f4f8); }
.c104 { width: 104px; }
.c88 { width: 88px; }
.c80 { width: 80px; }
.c46 { width: 46px; }
.c52 { width: 52px; }
.c91 { width: 91px; }
.message { padding: 7px 5px; background: #fff; font-size: 19px; line-height: 26px; }
.dialog footer { display: flex; justify-content: space-between; align-items: center; height: 18px; padding-left: 2px; }
.grip {
  width: 9px;
  height: 9px;
  align-self: flex-end;
  background: radial-gradient(circle, #aaa 1px, transparent 1px) 0 0 / 3px 3px;
  clip-path: polygon(100% 0, 100% 100%, 0 100%);
}

/* Command line */
.command {
  display: flex;
  width: 766px;
  border-radius: 3px 3px 0 0;
  overflow: hidden;
  background: #a3a8aa;
  color: #1a1a1a;
  font: 9px/12px "DejaVu Sans Mono", "Liberation Mono", monospace;
}
.gutter { width: 20px; display: flex; flex-direction: column; align-items: center; gap: 3px; padding: 3px 4px 0 0; }
.gutter svg { width: 12px; height: 12px; }
.wrench { margin-top: 4px; }
.dots {
  width: 13px;
  height: 5px;
  margin-left: 4px;
  background:
    linear-gradient(90deg, transparent 1px, #a3a8aa 1px) 0 0 / 2px 2px,
    linear-gradient(#333 1px, transparent 1px) 0 0 / 2px 2px;
}
.console { flex: 1; }
.history { padding: 4px 2px 2px; background: #91969a; }
.entry { display: flex; align-items: center; gap: 2px; height: 16px; padding: 0 4px 0 3px; background: #b9bdbf; }
.entry svg { width: 13px; height: 10px; }
.entry input { flex: 1; padding-left: 3px; }

/* Layout tabs and status bar */
.bottom { flex: none; display: flex; justify-content: space-between; height: 24px; border-top: 1px solid #bbb; background: #dadada; }
.layouts { display: flex; height: 14px; padding-left: 10px; gap: 3px; color: #777; }
.layouts button { padding: 0 8px; border-radius: 0 0 8px 8px; background: #e6e6e6; }
.layouts .on { background: #f7f7f7; color: #333; font-weight: bold; }
.layouts svg { width: 8px; height: 8px; }
.status { display: flex; padding: 1px 2px 3px 0; }
.status button { width: 20px; background: #f4f4f4; }
.status .model { width: 39px; margin-right: 1px; }
.status .dd { width: 12px; }
.status .ratio { width: 14px; }
.status .sep { margin-right: 1px; }

/* Taskbar */
.taskbar { flex: none; display: flex; height: 24px; background: #04201f; color: #f0f0f0; }
.pins { display: grid; grid-template-columns: repeat(9, 1fr); width: 264px; margin-right: 6px; }
.app { width: 122px; justify-content: flex-start; gap: 4px; padding-left: 3px; border-bottom: 2px solid #5b9ed8; }
.app svg { width: 12px; height: 12px; }
.note { width: 36px; }
.gap { margin-left: 6px; }
.active { width: 127px; margin-left: 4px; padding-left: 6px; background: #36504f; }
.tray { flex: 1; display: flex; justify-content: flex-end; padding-right: 9px; }
.tray button { width: 26px; }
.tray .en, .tray .clock { width: 34px; }
.tray .notif { width: 31px; }
.tray svg { stroke: #f0f0f0; }
```
